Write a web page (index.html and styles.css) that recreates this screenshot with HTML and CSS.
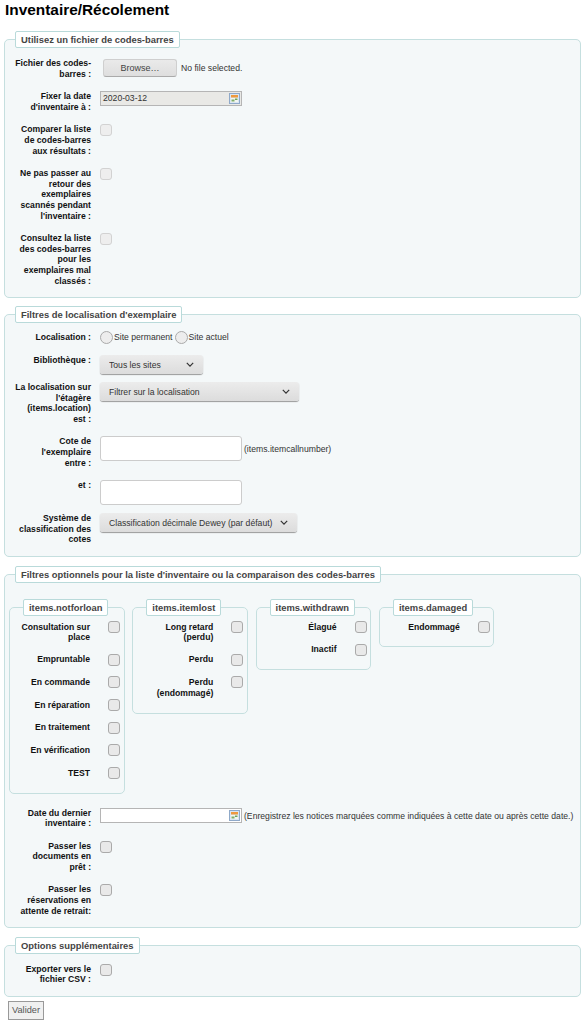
FILE: index.html
```html
<!DOCTYPE html>
<html lang="fr">
<head>
<meta charset="UTF-8">
<meta name="viewport" content="width=device-width, initial-scale=1.0">
<title>Inventaire/Récolement</title>
<link rel="stylesheet" href="styles.css">
</head>
<body>

<svg class="defs" width="0" height="0">
  <symbol id="cal" viewBox="0 0 11 11">
    <rect x="0.5" y="0.5" width="10" height="10" fill="#dbe6f3" stroke="#8fa9c9"/>
    <rect x="2" y="2" width="7" height="2.5" fill="#ee9a3e"/>
    <rect x="2" y="5" width="7" height="4" fill="#f3f6f2"/>
    <rect x="2.5" y="6.5" width="3" height="2" fill="#7fae6a"/>
    <rect x="6" y="5.5" width="2.5" height="1.5" fill="#6fa35a"/>
  </symbol>
  <symbol id="chev" viewBox="0 0 10 6">
    <path d="M1 1l4 4 4-4" fill="none" stroke="#333" stroke-width="1.5"/>
  </symbol>
</svg>

<h1>Inventaire/Récolement</h1>

<form>
  <fieldset class="box box-file">
    <legend>Utilisez un fichier de codes-barres</legend>
    <div class="row">
      <label>Fichier des codes-barres :</label>
      <button type="button" class="browse">Browse…</button>
      <span class="note nofile">No file selected.</span>
    </div>
    <div class="row">
      <label>Fixer la date d'inventaire à :</label>
      <div class="date date-off">
        <span>2020-03-12</span>
        <svg class="cal"><use href="#cal"/></svg>
      </div>
    </div>
    <div class="row">
      <label>Comparer la liste de codes-barres aux résultats :</label>
      <input type="checkbox" class="check check-off">
    </div>
    <div class="row">
      <label>Ne pas passer au retour des exemplaires scannés pendant l'inventaire :</label>
      <input type="checkbox" class="check check-off">
    </div>
    <div class="row">
      <label>Consultez la liste des codes-barres pour les exemplaires mal classés :</label>
      <input type="checkbox" class="check check-off">
    </div>
  </fieldset>

  <fieldset class="box box-loc">
    <legend>Filtres de localisation d'exemplaire</legend>
    <div class="row row-radio">
      <label>Localisation :</label>
      <input type="radio" name="loc" class="radio"><span class="note">Site permanent</span>
      <input type="radio" name="loc" class="radio"><span class="note">Site actuel</span>
    </div>
    <div class="row row-tight">
      <label>Bibliothèque :</label>
      <div class="select sel-s">
        <select><option>Tous les sites</option></select>
        <svg class="chev"><use href="#chev"/></svg>
      </div>
    </div>
    <div class="row">
      <label>La localisation sur l'étagère (items.location) est :</label>
      <div class="select sel-l">
        <select><option>Filtrer sur la localisation</option></select>
        <svg class="chev"><use href="#chev"/></svg>
      </div>
    </div>
    <div class="row">
      <label>Cote de l'exemplaire<br>entre :</label>
      <input type="text" class="text">
      <span class="note note-mid">(items.itemcallnumber)</span>
    </div>
    <div class="row row-tight">
      <label>et :</label>
      <input type="text" class="text">
    </div>
    <div class="row">
      <label>Système de classification des cotes</label>
      <div class="select sel-m">
        <select><option>Classification décimale Dewey (par défaut)</option></select>
        <svg class="chev"><use href="#chev"/></svg>
      </div>
    </div>
  </fieldset>

  <fieldset class="box box-opt">
    <legend>Filtres optionnels pour la liste d'inventaire ou la comparaison des codes-barres</legend>
    <div class="groups">
      <fieldset class="group">
        <legend>items.notforloan</legend>
        <div class="opt"><label>Consultation sur place</label><input type="checkbox" class="check"></div>
        <div class="opt"><label>Empruntable</label><input type="checkbox" class="check"></div>
        <div class="opt"><label>En commande</label><input type="checkbox" class="check"></div>
        <div class="opt"><label>En réparation</label><input type="checkbox" class="check"></div>
        <div class="opt"><label>En traitement</label><input type="checkbox" class="check"></div>
        <div class="opt"><label>En vérification</label><input type="checkbox" class="check"></div>
        <div class="opt"><label>TEST</label><input type="checkbox" class="check"></div>
      </fieldset>
      <fieldset class="group">
        <legend>items.itemlost</legend>
        <div class="opt"><label>Long retard (perdu)</label><input type="checkbox" class="check"></div>
        <div class="opt"><label>Perdu</label><input type="checkbox" class="check"></div>
        <div class="opt"><label>Perdu (endommagé)</label><input type="checkbox" class="check"></div>
      </fieldset>
      <fieldset class="group">
        <legend>items.withdrawn</legend>
        <div class="opt"><label>Élagué</label><input type="checkbox" class="check"></div>
        <div class="opt"><label>Inactif</label><input type="checkbox" class="check"></div>
      </fieldset>
      <fieldset class="group">
        <legend>items.damaged</legend>
        <div class="opt"><label>Endommagé</label><input type="checkbox" class="check"></div>
      </fieldset>
    </div>
    <div class="row">
      <label>Date du dernier inventaire :</label>
      <div class="date">
        <span></span>
        <svg class="cal"><use href="#cal"/></svg>
      </div>
      <span class="note note-date">(Enregistrez les notices marquées comme indiquées à cette date ou après cette date.)</span>
    </div>
    <div class="row">
      <label>Passer les documents en prêt :</label>
      <input type="checkbox" class="check">
    </div>
    <div class="row">
      <label>Passer les réservations en attente de retrait:</label>
      <input type="checkbox" class="check">
    </div>
  </fieldset>

  <fieldset class="box box-more">
    <legend>Options supplémentaires</legend>
    <div class="row">
      <label>Exporter vers le fichier CSV :</label>
      <input type="checkbox" class="check">
    </div>
  </fieldset>

  <button type="button" class="submit">Valider</button>
</form>

</body>
</html>
```

FILE: styles.css
```css
* {
  box-sizing: border-box;
}

html, body {
  height: 1024px;
  overflow: hidden;
}

body {
  margin: 0;
  padding: 0 4px;
  font-family: "Liberation Sans", Arial, sans-serif;
  font-size: 8.65px;
  line-height: 10.6px;
  color: #000;
  background: #fff;
}

.defs {
  position: absolute;
}

h1 {
  margin: 0;
  padding: 1px 0 0 1px;
  height: 31px;
  font-size: 15.4px;
  line-height: 18px;
  color: #000;
}

/* fieldsets */
fieldset {
  margin: 0;
  min-width: 0;
  background: #f4f8f9;
  border: 1px solid #c5dfdf;
  border-radius: 5px;
}

legend {
  padding: 0 5px;
  height: 17px;
  line-height: 15px;
  font-size: 9.4px;
  font-weight: bold;
  color: #444;
  background: #fff;
  border: 1.5px solid #b9dada;
  border-radius: 2px;
}

.box {
  margin-bottom: 8.5px;
  padding: 10px 10px 0 0;
}

.box > legend {
  margin-left: 10px;
}

.box-file { height: 266.5px; }
.box-loc { height: 251px; }
.box-opt { height: 362.5px; }
.box-more { height: 60px; margin-bottom: 4px; }

/* form rows */
.row {
  display: flex;
  align-items: flex-start;
  margin-bottom: 12px;
}

.row > label {
  flex: none;
  width: 86px;
  padding-left: 9px;
  margin-right: 9px;
  text-align: right;
  font-weight: bold;
  color: #111;
}

.row-radio { margin-top: -2px; margin-bottom: 11px; }
.row-tight { margin-bottom: 8px; }

.note {
  color: #333;
}

.note-mid {
  margin: 8px 0 0 2px;
}

.note-date {
  margin: 3px 0 0 2px;
  white-space: nowrap;
}

.nofile {
  margin: 5px 0 0 4px;
}

/* controls */
.browse {
  width: 74px;
  height: 18px;
  margin: 1px 0 0 3px;
  padding: 0;
  font: 9px "Liberation Sans", Arial, sans-serif;
  color: #444;
  background: linear-gradient(#eaeaea, #dedede);
  border: 1px solid #cfcfcf;
  border-bottom-color: #aaa;
  border-radius: 3px;
}

.date {
  display: flex;
  flex: none;
  align-items: center;
  justify-content: space-between;
  width: 142px;
  height: 15px;
  padding: 0 1px 0 2px;
  color: #333;
  background: #fff;
  border: 1px solid #b5b5b5;
}

.date-off {
  background: #e9e9e6;
}

.cal {
  width: 11px;
  height: 11px;
}

.check {
  appearance: none;
  flex: none;
  width: 12px;
  height: 12px;
  margin: 0;
  background: #e9e9e9;
  border: 1px solid #aaa;
  border-radius: 3px;
}

.check-off {
  background: #eeeeee;
  border-color: #d2d2d2;
}

.radio {
  appearance: none;
  flex: none;
  width: 13px;
  height: 13px;
  margin: 0 1px 0 0;
  background: #ededed;
  border: 1px solid #aaa;
  border-radius: 50%;
}

.row-radio label,
.row-radio .note {
  padding-top: 1px;
}

.row-radio .radio + .note {
  margin-right: 2px;
}

.select {
  position: relative;
  height: 19px;
}

.select select {
  appearance: none;
  display: block;
  width: 100%;
  height: 100%;
  padding: 0 0 0 9px;
  font: 8.65px "Liberation Sans", Arial, sans-serif;
  color: #333;
  background: linear-gradient(#ececec, #dcdcdc);
  border: 0;
  border-radius: 3px;
  box-shadow: 0 1px 1px #999;
}

.sel-s { width: 103px; }
.sel-l { width: 199px; }
.sel-m { width: 197px; }

.chev {
  position: absolute;
  right: 9px;
  top: 7px;
  width: 8px;
  height: 5px;
}

.text {
  width: 142px;
  height: 25px;
  margin: 0;
  padding: 0 3px;
  background: #fff;
  border: 1px solid #ccc;
  border-radius: 3px;
}

/* status groups */
.groups {
  display: flex;
  align-items: flex-start;
  gap: 7.8px;
  margin: 6.5px 0 14px 4px;
}

.group {
  width: 115.5px;
  padding: 5px 0 0 0;
}

.group:nth-child(1) { height: 194.5px; }
.group:nth-child(2) { height: 114.5px; }
.group:nth-child(3) { height: 70.5px; }
.group:nth-child(4) { height: 47.5px; }

.group legend {
  margin-left: 13px;
}

.opt {
  display: flex;
  align-items: flex-start;
  justify-content: flex-end;
  margin-bottom: 10.7px;
  padding-right: 3.5px;
}

.opt label {
  flex: 1;
  padding: 0.7px 0 0 8px;
  margin-right: 18px;
  text-align: right;
  font-weight: bold;
  color: #111;
}

.submit {
  display: block;
  width: 36px;
  height: 19px;
  margin-left: 4px;
  padding: 0;
  font: 9.2px "Liberation Sans", Arial, sans-serif;
  color: #555;
  background: #f0f0f0;
  border: 1px solid #999;
}
```
